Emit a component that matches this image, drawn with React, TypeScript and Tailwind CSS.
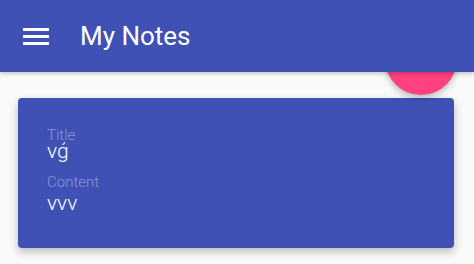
const App = () => {
  return (
    <div className="relative h-[264px] w-[474px] overflow-hidden bg-[#fafafa] font-['Roboto',sans-serif]">
      {/* fab peeking out below the toolbar */}
      <div className="absolute left-[385px] top-[23px] h-[72px] w-[72px] rounded-full bg-[#ff4081] shadow-[0_3px_6px_rgba(0,0,0,0.25)]" />

      <header className="relative z-10 flex h-[72px] items-center bg-[#3f51b5] shadow-[0_2px_4px_rgba(0,0,0,0.2)]">
        <button className="ml-[23px] flex w-[26px] flex-col gap-[4px]">
          <span className="h-[3px] w-full bg-white" />
          <span className="h-[3px] w-full bg-white" />
          <span className="h-[3px] w-full bg-white" />
        </button>
        <h1 className="ml-[31px] text-[26px] leading-none text-white">My Notes</h1>
      </header>

      <div className="ml-[18px] mt-[26px] h-[150px] w-[436px] rounded-[4px] bg-[#3f51b5] pl-[29px] pt-[30px] font-light shadow-[0_4px_10px_rgba(0,0,0,0.25)]">
        <p className="text-[15px] leading-[14px] text-white/40">Title</p>
        <p className="text-[21px] leading-[18px] text-white">vǵ</p>
        <p className="mt-[15px] text-[15px] leading-[14px] text-white/40">Content</p>
        <p className="mt-[5px] text-[21px] leading-[18px] text-white">vvv</p>
      </div>
    </div>
  );
};

export default App;
